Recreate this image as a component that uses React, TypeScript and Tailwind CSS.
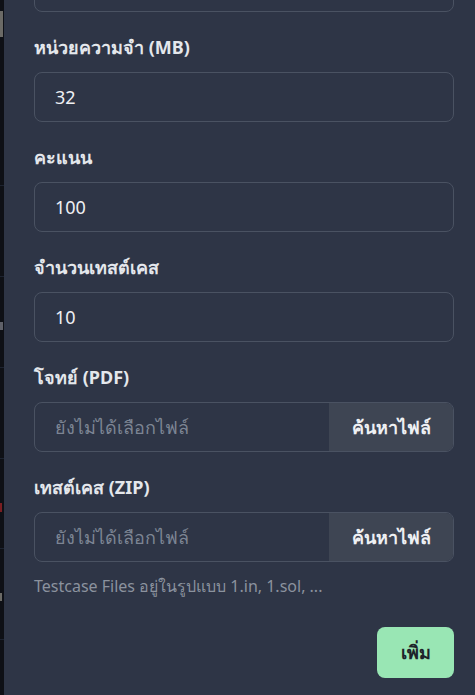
import React from "react";

type Field = { label: string; value: string };

const numberFields: Field[] = [
  { label: "หน่วยความจำ (MB)", value: "32" },
  { label: "คะแนน", value: "100" },
  { label: "จำนวนเทสต์เคส", value: "10" },
];

const fileFields = ["โจทย์ (PDF)", "เทสต์เคส (ZIP)"];

function Label({ children }: { children: React.ReactNode }) {
  return (
    <div className="pt-[21px] pb-[11px] text-[18px] leading-7 font-bold text-[#e4e7ec]">
      {children}
    </div>
  );
}

function FileInput() {
  return (
    <div className="flex h-[50px] w-[420px] overflow-hidden rounded-lg border border-[#4a5262]">
      <div className="flex flex-1 items-center pl-5 text-[18px] text-[#7d8594]">
        ยังไม่ได้เลือกไฟล์
      </div>
      <button className="w-[124px] bg-[#3e4553] text-[18px] font-bold text-[#eef0f3]">
        ค้นหาไฟล์
      </button>
    </div>
  );
}

export default function App() {
  return (
    <div
      className="flex h-[695px] w-[475px] overflow-hidden bg-[#2e3546]"
      style={{ fontFamily: '"Noto Sans", "Liberation Sans", sans-serif' }}
    >
      {/* page behind the drawer, mostly hidden */}
      <div className="flex w-[4px] flex-col bg-[#0e1016]">
        <div className="mt-[11px] h-[26px] w-[3px] bg-[#6b6a66]" />
        <div className="mt-[148px] h-px bg-[#1d2330]" />
        <div className="mt-[90px] h-px bg-[#1d2330]" />
        <div className="mt-[45px] h-[8px] w-[3px] bg-[#5e6068]" />
        <div className="mt-[37px] h-px bg-[#1d2330]" />
        <div className="mt-[90px] h-px bg-[#1d2330]" />
        <div className="mt-[44px] h-[9px] w-[2px] bg-[#7a1e22]" />
        <div className="mt-[36px] h-px bg-[#1d2330]" />
        <div className="mt-[44px] h-[8px] w-[2px] bg-[#6b6a66]" />
        <div className="mt-[38px] h-px bg-[#1d2330]" />
      </div>

      {/* drawer */}
      <div className="flex flex-1 flex-col pl-[30px]">
        <div className="-mt-[38px] h-[50px] w-[420px] rounded-lg border border-[#4a5262]" />

        {numberFields.map((f) => (
          <div key={f.label} className="flex flex-col">
            <Label>{f.label}</Label>
            <div className="flex h-[50px] w-[420px] items-center rounded-lg border border-[#4a5262] pl-5 text-[18px] text-[#eef0f3]">
              {f.value}
            </div>
          </div>
        ))}

        {fileFields.map((l) => (
          <div key={l} className="flex flex-col">
            <Label>{l}</Label>
            <FileInput />
          </div>
        ))}

        <div className="mt-[12px] text-[16px] leading-6 text-[#8b929e]">
          Testcase Files อยู่ในรูปแบบ 1.in, 1.sol, ...
        </div>

        <div className="mt-[29px] flex w-[420px] justify-end">
          <button className="h-[51px] w-[77px] rounded-lg bg-[#99e6b4] text-[18px] font-bold text-[#1d232a]">
            เพิ่ม
          </button>
        </div>
      </div>
    </div>
  );
}
